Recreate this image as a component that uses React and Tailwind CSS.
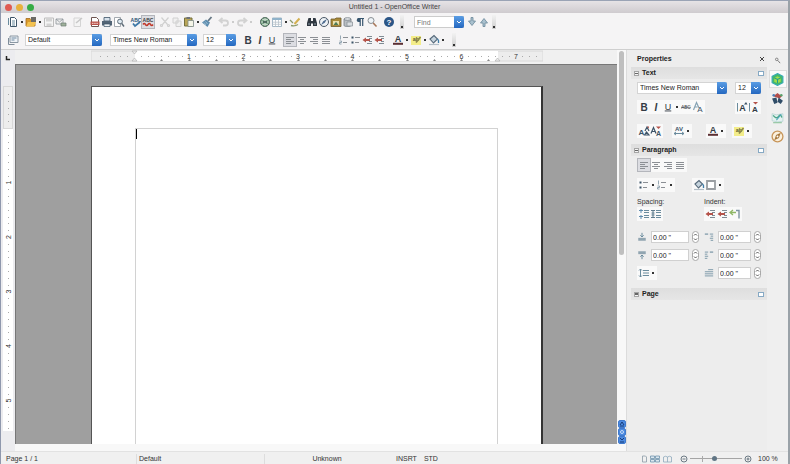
import { useState } from "react";
import clsx from "clsx";

const INCH = 54.5;
const NAVY = "#3d5468";
const TEAL = "#6a8b9d";
const RED = "#b5534a";
const INK = "#333b44";

function Letter({ x = 6, y = 9, size = 8, fill = INK, children, ...rest }) {
  return (
    <text x={x} y={y} fontSize={size} fill={fill} textAnchor="middle" fontFamily="Liberation Sans, sans-serif" {...rest}>
      {children}
    </text>
  );
}

function Lines({ rows, color = "#8b8f94" }) {
  return rows.map(([x1, x2, y]) => <path key={`${x1}-${y}`} d={`M${x1} ${y}H${x2}`} stroke={color} />);
}

const indentLines = [
  [5, 10, 2.5],
  [7, 10, 4.5],
  [7, 10, 7.5],
  [5, 10, 9.5],
];

const icons = {
  newDoc: (
    <>
      <path d="M3.5 1.5h4l2 2v7h-6z" fill="#fff" stroke={NAVY} />
      <path d="M1.5 2v7M5 5h3M5 7h3M5 9h3" stroke={TEAL} />
    </>
  ),
  open: (
    <>
      <path d="M1 2.5h4l1 1h4V10H1z" fill="#d99a2b" stroke="#a56a1c" strokeWidth=".8" />
      <path d="M6 1h5v5H6z" fill="#6b6a66" />
      <path d="M3 6h8l-2 4.5H1z" fill="#f3c24f" />
    </>
  ),
  save: (
    <>
      <path d="M1.5 2h9v8.500h-9z" fill="#f4f4f4" stroke="#bdbdbd" />
      <path d="M3 2h6v3.500H3zM3.500 7.500h5V10h-5z" fill="#d3d3d3" />
    </>
  ),
  mail: (
    <>
      <path d="M1 3h7v5H1z" fill="#eee" stroke="#8d949a" strokeWidth=".8" />
      <path d="M1 3l3.500 3L8 3" stroke="#8d949a" strokeWidth=".8" />
      <path d="M6 7h5v3H6z" fill="#9fb19a" stroke="#6f7b74" strokeWidth=".7" />
    </>
  ),
  edit: (
    <>
      <path d="M2 2h6.500v8.500H2z" fill="#f4f4f4" stroke="#d4d4d4" />
      <path d="M4 7l6-5" stroke="#c8c8c8" strokeWidth="1.600" />
    </>
  ),
  pdf: (
    <>
      <path d="M2.500 1.500h5l2 2v7h-7z" fill="#fff" stroke="#6d5450" />
      <path d="M1.500 5.500h9V9h-9z" fill="#b9524a" />
      <path d="M3 7.300h6" stroke="#f6dcd8" strokeDasharray="1.500 .7" />
    </>
  ),
  print: (
    <>
      <path d="M3 1.500h6V5H3z" fill="#d7e2ec" stroke={NAVY} strokeWidth=".8" />
      <path d="M1 5h10v4.500H1z" fill="#526475" />
      <path d="M3 8h6v2.500H3z" fill="#eef2f5" stroke={NAVY} strokeWidth=".7" />
    </>
  ),
  preview: (
    <>
      <path d="M1.500 1.500h6v9h-6z" fill="#fff" stroke="#8f979e" strokeWidth=".8" />
      <circle cx="7" cy="5.500" r="2.400" fill="#dfeaf2" stroke="#5c6a76" />
      <path d="M8.800 7.500L11 10.500" stroke="#5c6a76" strokeWidth="1.400" />
    </>
  ),
  spell: (
    <>
      <Letter y={5.5} size={5} fill="#2b5274" fontWeight="bold">ABC</Letter>
      <path d="M3 7.500l2 2.500 5-4" stroke="#3f78a6" strokeWidth="1.800" />
    </>
  ),
  autoSpell: (
    <>
      <Letter y={5.5} size={5} fill="#3b3f45" fontWeight="bold">ABC</Letter>
      <path d="M1 8.500q1.200-2 2.500 0t2.500 0 2.500 0 2.500 0" stroke="#c0392b" strokeWidth="1.500" />
    </>
  ),
  cut: <path d="M2.500 1.500l6 7M9.500 1.500l-6 7M2.500 8.500a1 1 0 100 2 1 1 0 000-2zM9.500 8.500a1 1 0 100 2 1 1 0 000-2z" stroke="#d0d0d0" strokeWidth="1.200" />,
  copy: <path d="M2 2h5v5H2zM5 5h5v5.500H5z" fill="#f0f0f0" stroke="#d0d0d0" />,
  paste: (
    <>
      <path d="M1.500 2h7.500v8h-7.500z" fill="#b9a557" stroke="#75703f" />
      <path d="M3.500 1h3.500v2H3.500z" fill="#6f7378" />
      <path d="M5 4.500h5.500v6H5z" fill="#f5f5e8" stroke="#7e8a86" strokeWidth=".8" />
    </>
  ),
  brush: (
    <>
      <path d="M10.500 1L7 5" stroke="#667684" strokeWidth="1.800" />
      <path d="M5 3.500l4 3-2.500 4.500L1 6.500z" fill="#5d8cae" />
      <path d="M3 6.500l2 2.500M4.500 5.500l2 2.500" stroke="#b5d1e2" strokeWidth=".7" />
    </>
  ),
  undo: <path d="M4.500 2L1.500 4.500l3 2.500M2 4.500h5.500a2.500 2.500 0 010 5H5" stroke="#d2d2d2" strokeWidth="1.800" />,
  redo: <path d="M7.500 2l3 2.500-3 2.500M10 4.500H4.500a2.500 2.500 0 000 5H7" stroke="#d2d2d2" strokeWidth="1.800" />,
  globe: (
    <>
      <circle cx="6" cy="6" r="4.500" fill="#7ea88a" stroke="#3d5a4c" />
      <path d="M1.500 6h9M6 1.500v9M3 3q3 2 6 0M3 9q3-2 6 0" stroke="#e6eee6" strokeWidth=".7" />
      <path d="M4 6h4" stroke="#2e4d42" strokeWidth="1.500" />
    </>
  ),
  table: (
    <>
      <path d="M1.500 2h9v8.500h-9z" fill="#fff" stroke="#9bb0c0" strokeWidth=".9" />
      <path d="M1.500 2h9v2h-9z" fill="#8fb2ca" />
      <path d="M1.500 6.200h9M1.500 8.300h9M4.500 4v6.500M7.500 4v6.500" stroke="#b7c2ca" strokeWidth=".8" />
    </>
  ),
  draw: (
    <>
      <path d="M1 4l3 3M2 9.500q4 1 7-1" stroke="#8a9a6c" strokeWidth="1.300" />
      <path d="M10.500 2.500L5.500 8" stroke="#d3b04f" strokeWidth="2" />
    </>
  ),
  find: (
    <>
      <path d="M2.500 2h2.500v3H7V2h2.500l1.500 5v3H7V7.500H5V10H1V7z" fill="#2f3740" />
      <path d="M2 8h2M8 8h2" stroke="#8b9aa6" />
    </>
  ),
  navigator: (
    <>
      <circle cx="6" cy="6" r="4.500" fill="#eef2f6" stroke="#4b5866" />
      <path d="M9 3L6.800 6.800 3 9l2.200-3.800z" fill="#4d6a8e" />
    </>
  ),
  gallery: (
    <>
      <path d="M1 3h4l1-1h5v8.500H1z" fill="#a98a3a" stroke="#6e5b2c" strokeWidth=".8" />
      <path d="M3 5h6v4H3z" fill="#e9dfae" />
      <path d="M3.500 9L6 5.800 8.500 9z" fill="#4f7a55" />
    </>
  ),
  data: (
    <>
      <path d="M2 3v6.500c0 1.300 7 1.300 7 0V3z" fill="#b9bec3" stroke="#747c84" strokeWidth=".8" />
      <ellipse cx="5.500" cy="3" rx="3.500" ry="1.300" fill="#e4e7ea" stroke="#747c84" strokeWidth=".8" />
      <path d="M5 6h5.500v4H5z" fill="#d9dde1" stroke="#858d94" strokeWidth=".7" />
    </>
  ),
  pilcrow: (
    <>
      <path d="M6 2.500H4.500a1.800 1.800 0 000 3.600H6z" fill="#38566f" />
      <path d="M3.500 2.500H10M6.200 2.500V10M8.700 2.500V10" stroke="#38566f" strokeWidth="1.200" />
    </>
  ),
  zoom: (
    <>
      <circle cx="5" cy="4.500" r="3" fill="#eef4f8" stroke="#8a8f94" />
      <path d="M7.200 7L10.500 10.500" stroke="#a8785a" strokeWidth="1.600" />
    </>
  ),
  help: (
    <>
      <circle cx="6" cy="6" r="5" fill="#2c5687" />
      <Letter y={9} size={8} fill="#fff" fontWeight="bold">?</Letter>
    </>
  ),
  down: <path d="M5 1.500h2V5h2.500L6 9.500 2.500 5H5z" fill="#a9c0ce" stroke="#7490a0" strokeWidth=".9" />,
  up: <path d="M5 10.500h2V7h2.500L6 2.500 2.500 7H5z" fill="#a9c0ce" stroke="#7490a0" strokeWidth=".9" />,
  styles: (
    <>
      <path d="M3 2h8v6.500H3z" fill="#eef2f6" stroke="#7f8d9a" strokeWidth=".9" />
      <path d="M4.500 4h5M4.500 6h3" stroke="#6e8aa3" />
      <path d="M1.500 4v6.500h6" stroke="#7f8d9a" />
    </>
  ),
  bold: <Letter y={9.5} size={10} fontWeight="bold">B</Letter>,
  italic: <Letter y={9.5} size={10} fontStyle="italic" fontWeight="bold">I</Letter>,
  underline: <Letter y={8.5} size={9} textDecoration="underline">U</Letter>,
  left: <Lines rows={[[2, 10, 3.5], [2, 7, 5.5], [2, 10, 7.5], [2, 7, 9.5]]} />,
  center: <Lines rows={[[2, 10, 3.5], [4, 8, 5.5], [2, 10, 7.5], [4, 8, 9.5]]} />,
  right: <Lines rows={[[2, 10, 3.5], [5, 10, 5.5], [2, 10, 7.5], [5, 10, 9.5]]} />,
  justify: <Lines rows={[[2, 10, 3.5], [2, 10, 5.5], [2, 10, 7.5], [2, 10, 9.5]]} />,
  numbered: (
    <>
      <path d="M2.500 1.500v4M1.500 7h2v1.500h-2V10h2" stroke="#7f95a3" strokeWidth=".8" />
      <Lines rows={[[5, 10, 3.5], [5, 9, 8.5]]} />
    </>
  ),
  bullets: (
    <>
      <path d="M1.500 2.500h2v2h-2zM1.500 7.500h2v2h-2z" fill={NAVY} />
      <Lines rows={[[5, 10, 3.5], [5, 9, 8.5]]} />
    </>
  ),
  outdent: (
    <>
      <Lines rows={indentLines} color="#7f8b94" />
      <path d="M4 3.500L.5 6 4 8.500V7h4V5H4z" fill={RED} />
    </>
  ),
  fontColor: (
    <>
      <Letter y={8} size={9} fontWeight="bold">A</Letter>
      <path d="M1 9.800h10" stroke="#5b2f33" strokeWidth="2" />
    </>
  ),
  highlight: (
    <>
      <path d="M1 2h10v9H1z" fill="#f3ed8a" />
      <Letter y={6.5} size={5.5} fill="#5b5a33" fontWeight="bold">ab</Letter>
      <path d="M10.500 3L6 8.500" stroke="#8f8a4c" strokeWidth="1.700" />
    </>
  ),
  fill: (
    <>
      <path d="M2 5l4-3.500L9.500 5l-4 4z" fill="#c5d3dd" stroke="#56697a" strokeWidth="1.100" />
      <path d="M9.500 5q1.500 1 1 4" stroke="#3f7da8" strokeWidth="1.400" />
      <path d="M1 10.500h10" stroke="#b3bec7" strokeWidth="1.200" />
    </>
  ),
  strike: (
    <>
      <Letter y={8} size={4.5}>ABC</Letter>
      <path d="M1 6.300h10" stroke={INK} strokeWidth=".6" />
    </>
  ),
  shadow: (
    <>
      <path d="M1.500 9L4.500 1.500 7 7M2.500 6h3" stroke="#86a3b4" strokeWidth="1.200" />
      <Letter x={8} y={10.5} size={8} fill={NAVY}>A</Letter>
    </>
  ),
  grow: (
    <>
      <path d="M1.500 2v8.500" stroke={TEAL} />
      <Letter x={6.5} y={10} size={9} fontWeight="bold">A</Letter>
      <path d="M8 3.500l2-2.500 1.500 2.500z" fill={NAVY} />
    </>
  ),
  shrink: (
    <>
      <path d="M1.500 2v8.500" stroke={TEAL} />
      <Letter x={7} y={10.5} size={8} fontWeight="bold">A</Letter>
      <path d="M5 1h5L7.500 3.500z" fill={RED} />
    </>
  ),
  superscript: (
    <>
      <Letter x={3.5} y={10} size={8} fill={NAVY} fontWeight="bold">A</Letter>
      <path d="M7 6l2-4 2 4M6.500 10l2-3 2.500 3z" stroke={NAVY} strokeWidth="1.200" />
      <path d="M9 1.500h2v2z" fill={RED} />
    </>
  ),
  subscript: (
    <>
      <path d="M1 8.500L3.500 2.500 6 8.500M2 6.500h3" stroke={NAVY} strokeWidth="1.200" />
      <Letter x={8.5} y={10.5} size={7} fill={NAVY} fontWeight="bold">A</Letter>
      <path d="M6 1.500h5L8.500 4z" fill={RED} />
    </>
  ),
  charSpacing: (
    <>
      <Letter y={6} size={6} fill={NAVY} fontWeight="bold">AV</Letter>
      <path d="M1 8.500h10M3 7L1 8.500 3 10M9 7l2 1.500L9 10" stroke={TEAL} />
    </>
  ),
  paraMore: (
    <>
      <path d="M1 2.500h4M3 1v4M1 8.500h4M3 7v4" stroke="#5f8cae" />
      <Lines rows={[[6, 11, 2.5], [6, 11, 4.5], [6, 11, 7.5], [6, 11, 9.5]]} color={TEAL} />
    </>
  ),
  paraLess: (
    <>
      <path d="M1 2.500h4M1 9.500h4M3 3v6M1.500 5h3M1.500 7h3" stroke="#5f7c8e" />
      <Lines rows={[[6, 11, 2.5], [6, 11, 4.5], [6, 11, 7.5], [6, 11, 9.5]]} color={TEAL} />
    </>
  ),
  hanging: (
    <>
      <path d="M4 2L1 4.500 4 7M1.500 4.500H7" stroke="#8fb765" strokeWidth="1.300" />
      <path d="M7 2.500h3v8" stroke="#7d93a1" strokeWidth="1.400" />
    </>
  ),
  above: (
    <>
      <path d="M6 1v5M4 4l2 2 2-2" stroke={TEAL} strokeWidth="1.200" />
      <path d="M1.500 7h9v3.500h-9z" fill="#91a5b1" />
    </>
  ),
  below: (
    <>
      <path d="M1.500 1.500h9V5h-9z" fill="#91a5b1" />
      <path d="M6 11V6M4 8l2-2 2 2" stroke={TEAL} strokeWidth="1.200" />
    </>
  ),
  before: (
    <>
      <path d="M1 2.500h4" stroke={TEAL} strokeWidth="1.300" />
      <Lines rows={[[7, 11, 2.5], [8, 11, 5], [7, 11, 7.5], [8, 11, 10]]} color={TEAL} />
    </>
  ),
  after: (
    <>
      <path d="M7 2.500h4" stroke={TEAL} strokeWidth="1.300" />
      <Lines rows={[[1, 5, 2.5], [1, 4, 5], [1, 5, 7.5], [1, 4, 10]]} color={TEAL} />
    </>
  ),
  firstLine: <Lines rows={[[5, 11, 2], [1, 11, 4.5], [1, 11, 7], [1, 11, 9.5]]} color={TEAL} />,
  lineSpacing: (
    <>
      <path d="M2.500 2v8M1 3.500L2.500 2 4 3.500M1 8.500L2.500 10 4 8.500" stroke={TEAL} />
      <Lines rows={[[5, 11, 3.5], [5, 11, 6], [5, 11, 8.5]]} color={TEAL} />
    </>
  ),
  swatch: <path d="M2 2h8v8H2z" fill="#fff" stroke="#9a9ea2" strokeWidth="1.800" />,
  gear: (
    <>
      <circle cx="5" cy="4.500" r="1.700" stroke="#666" fill="none" />
      <path d="M6.500 6l3 3.500" stroke="#555" />
    </>
  ),
  properties: (
    <>
      <path d="M6 .5l5 2.500v6L6 11.500 1 9V3z" fill="#43b96a" stroke="#35a9b8" />
      <path d="M3 4.500l3-1.500 3 1.500v3.500L6 9.500 3 8z" fill="#9fdc4c" />
      <path d="M3 4.500L6 6l3-1.500M6 6v3.500" stroke="#1f9c8c" />
    </>
  ),
  character: (
    <>
      <path d="M2 4l4-3 4 3-2 2z" fill="#b24d4a" />
      <path d="M1 6l4-1 1 5-3 1zM7 5l4 3-2 3-3-2z" fill="#304d68" />
      <circle cx="9.500" cy="3" r="1.200" fill="#5aa06a" />
      <circle cx="2.500" cy="3" r="1.200" fill="#4c7fb4" />
    </>
  ),
  galleryTab: (
    <>
      <path d="M1 2.500l4 1 6-1v7L6 10 1 9z" fill="#e4f2f0" stroke="#b4d2d2" strokeWidth=".7" />
      <path d="M2 4q3 4 5 1t3 1" stroke="#4ca587" strokeWidth="1.300" />
      <path d="M9.500 3L5 8.500" stroke="#4fa5bd" />
      <path d="M2 10.800h8" stroke="#8bc39b" />
    </>
  ),
  compass: (
    <>
      <circle cx="6" cy="6" r="5" fill="#fbf0dc" stroke="#c8965a" strokeWidth="1.200" />
      <path d="M9 2.500L7.300 7.300 3 9.500l1.700-4.800z" fill="#a8793d" />
      <circle cx="6" cy="6" r=".9" fill="#fff" />
    </>
  ),
};

function Icon({ name, className = "size-3" }) {
  return (
    <svg viewBox="0 0 12 12" fill="none" className={clsx("shrink-0", className)} aria-hidden="true">
      {icons[name]}
    </svg>
  );
}

function Tool({ name, pressed = false, menu = false, muted = false }) {
  return (
    <>
      <button
        type="button"
        aria-label={name}
        aria-pressed={pressed || undefined}
        className={clsx("flex size-3 shrink-0 items-center justify-center", pressed && "bg-[#dcdde2] outline outline-[#b4b6bc]")}
      >
        <Icon name={name} />
      </button>
      {menu && (
        <button type="button" aria-label={`${name} menu`} className="flex w-[6px] shrink-0 items-center justify-center">
          <span className={clsx("size-[2px]", muted ? "bg-[#cccccc]" : "bg-[#333333]")} />
        </button>
      )}
    </>
  );
}

function Group({ items }) {
  return (
    <div className="flex">
      {items.map((item, index) => (
        <Tool key={`${item.name}-${index}`} {...item} />
      ))}
    </div>
  );
}

function Chevron() {
  return (
    <span className="pointer-events-none absolute inset-y-0 right-0 flex w-[10px] items-center justify-center rounded-r-xs bg-linear-to-b from-[#5a9de4] to-[#2468c0]">
      <svg viewBox="0 0 6 4" className="h-1 w-[6px]" fill="none" aria-hidden="true">
        <path d="M1 1l2 2 2-2" stroke="#fff" />
      </svg>
    </span>
  );
}

function Combo({ label, value, className }) {
  return (
    <div className={clsx("relative h-3", className)}>
      <select
        aria-label={label}
        defaultValue={value}
        className="block h-3 w-full appearance-none border border-[#d4d4d4] bg-white pl-[2px] text-[7px] leading-[10px] text-[#222222] outline-none"
      >
        <option>{value}</option>
      </select>
      <Chevron />
    </div>
  );
}

function Handle() {
  return (
    <div className="flex h-[14px] w-1 items-end justify-center bg-linear-to-b from-[#f2f2f2] to-[#cfcfcf] pb-px">
      <span className="size-[2px] bg-[#333333]" />
    </div>
  );
}

function Toolbars() {
  return (
    <div className="border-b border-[#cfcfcf] bg-[#f5f4f5]">
      <div className="flex h-[18px] items-center pl-[6px]">
        <div className="flex items-center gap-[5px]">
          <Group items={[{ name: "newDoc", menu: true }, { name: "open", menu: true }, { name: "save" }, { name: "mail" }]} />
          <Group items={[{ name: "edit" }]} />
          <Group items={[{ name: "pdf" }, { name: "print" }, { name: "preview" }]} />
          <Group items={[{ name: "spell" }, { name: "autoSpell", pressed: true }]} />
          <Group items={[{ name: "cut" }, { name: "copy" }, { name: "paste", menu: true }, { name: "brush" }]} />
          <Group items={[{ name: "undo", menu: true, muted: true }, { name: "redo", menu: true, muted: true }]} />
          <Group items={[{ name: "globe" }, { name: "table", menu: true }, { name: "draw" }]} />
          <Group items={[{ name: "find" }, { name: "navigator" }, { name: "gallery" }, { name: "data" }, { name: "pilcrow" }, { name: "zoom" }]} />
          <Group items={[{ name: "help" }]} />
          <Handle />
        </div>
        <div className="ml-[10px] flex items-center gap-[2px]">
          <div className="relative w-[50px]">
            <input
              type="text"
              aria-label="Find"
              placeholder="Find"
              className="block h-3 w-full border border-[#cccccc] bg-white pl-[2px] text-[7px] leading-[10px] placeholder:text-[#777777] outline-none"
            />
            <Chevron />
          </div>
          <Group items={[{ name: "down" }, { name: "up" }]} />
          <Handle />
        </div>
      </div>
      <div className="flex h-[18px] items-center gap-[6px] pl-[6px]">
        <Group items={[{ name: "styles" }]} />
        <Combo label="Paragraph style" value="Default" className="w-[77px]" />
        <Combo label="Font name" value="Times New Roman" className="ml-[2px] w-[87px]" />
        <Combo label="Font size" value="12" className="w-[33px]" />
        <Group items={[{ name: "bold" }, { name: "italic" }, { name: "underline" }]} />
        <Group items={[{ name: "left", pressed: true }, { name: "center" }, { name: "right" }, { name: "justify" }]} />
        <Group items={[{ name: "numbered" }, { name: "bullets" }, { name: "outdent" }, { name: "outdent" }]} />
        <Group items={[{ name: "fontColor", menu: true }, { name: "highlight", menu: true }, { name: "fill", menu: true }]} />
        <Handle />
      </div>
    </div>
  );
}

// Dots at every eighth of an inch, a tab stop at every half, a number at every inch.
function rulerMarks(from, to) {
  const marks = [];
  for (let i = from; i <= to; i += 1) {
    marks.push({ i, pos: 43 + (i * INCH) / 8, whole: i % 8 === 0, half: i % 4 === 0 });
  }
  return marks;
}

function HorizontalRuler() {
  return (
    <svg className="h-3 w-[452px] shrink-0 text-[7px]" aria-hidden="true">
      <rect x="0" y="1" width="452" height="10" fill="#ededed" stroke="#d8d8d8" />
      <rect x="44" y="1" width="363" height="10" fill="#fff" />
      {rulerMarks(-5, 59).map(({ i, pos, whole, half }) => (
        <g key={i}>
          {whole && i > 0 ? (
            <text x={pos + 0.5} y="8.500" textAnchor="middle" fill="#333">
              {i / 8}
            </text>
          ) : (
            i !== 0 && <rect x={Math.round(pos)} y="6" width="1" height="1" fill="#aaa" />
          )}
          {half && i > 0 && i < 54 && <path d={`M${Math.round(pos) - 1} 11h3l-1.500-2z`} fill="#888" />}
        </g>
      ))}
      <path d="M41 1h5l-2.500 3zM41 11h5l-2.500-3zM404 11h5l-2.500-3z" fill="#eee" stroke="#aaa" strokeWidth=".6" />
    </svg>
  );
}

function VerticalRuler() {
  return (
    <svg className="min-h-0 w-[10px] flex-1 text-[7px]" aria-hidden="true">
      <rect width="10" height="100%" fill="#fff" />
      <rect x=".5" y=".5" width="9" height="42" fill="#ededed" stroke="#d8d8d8" />
      {rulerMarks(-5, 44).map(({ i, pos, whole }) =>
        whole && i > 0 ? (
          <text key={i} transform={`translate(7.500 ${pos - 1}) rotate(-90)`} textAnchor="middle" fill="#333">
            {i / 8}
          </text>
        ) : (
          i !== 0 && <rect key={i} x="5" y={Math.round(pos) - 1} width="1" height="1" fill="#aaa" />
        ),
      )}
    </svg>
  );
}

function Workspace() {
  return (
    <div className="flex min-w-0 flex-1">
      <div className="flex w-[14px] shrink-0 flex-col items-center bg-[#ececef] pb-5">
        <div className="flex h-9 w-full justify-center pt-[5px]">
          <svg viewBox="0 0 6 6" className="size-[6px]" fill="none" aria-hidden="true">
            <path d="M1.500 1v3.500H5" stroke="#222" strokeWidth="1.500" />
          </svg>
        </div>
        <VerticalRuler />
      </div>
      <div className="flex min-w-0 flex-1 flex-col bg-[#f8f8f8]">
        <div className="flex h-[14px] shrink-0 items-start justify-center overflow-hidden border-l border-[#f0f0f0] bg-[#f0f0f0]">
          <HorizontalRuler />
        </div>
        <div className="flex min-h-0 flex-1 justify-center overflow-hidden border-t border-l border-[#777777] bg-[#9f9f9f] pt-[21px]">
          <div className="flex w-[452px] shrink-0 border-t border-r-2 border-l border-t-[#555555] border-r-[#333333] border-l-[#555555] bg-white px-[43px] pt-[41px]">
            <div className="flex flex-1 border border-b-0 border-[#d2d2d2]">
              <span className="h-[10px] w-px bg-black" />
              <textarea aria-label="Document text" className="min-h-0 flex-1 resize-none text-[9px] outline-none" />
            </div>
          </div>
        </div>
        <div className="h-[7px] shrink-0" />
      </div>
      <div className="flex w-[9px] shrink-0 flex-col items-center bg-[#f8f8f8] pt-px pb-[7px]">
        <div className="h-[204px] w-[5px] rounded-full bg-[#bfbfbf]" />
        <div className="mt-auto flex w-2 flex-col">
          {["Previous page", "Navigation", "Next page"].map((label, index) => (
            <button key={label} type="button" aria-label={label} className="flex size-2 items-center justify-center rounded-xs border border-[#3f79cc] bg-[#4c8ae0]">
              <svg viewBox="0 0 6 6" className="size-[6px]" fill="none" aria-hidden="true">
                {index === 1 ? <circle cx="3" cy="3" r="1.500" stroke="#c6dcf7" /> : <path d={index ? "M1 1l2 2 2-2M1 5h4" : "M1 4l2-3 2 3M1 5h4"} stroke="#163a77" />}
              </svg>
            </button>
          ))}
        </div>
      </div>
    </div>
  );
}

function SectionHeader({ title, collapsed = false }) {
  return (
    <div className="flex h-3 items-center gap-[3px] bg-linear-to-b from-[#dedede] to-[#e6e6e6] px-[3px]">
      <button type="button" aria-label={`Toggle ${title}`} className="flex size-[5px] items-center justify-center border border-[#a5a5a5] bg-[#f5f5f5]">
        <span className={clsx("w-[3px] bg-[#666666]", collapsed ? "h-[2px]" : "h-px")} />
      </button>
      <h3 className="text-[7px] leading-3 font-bold text-[#222222]">{title}</h3>
      <button type="button" aria-label={`${title} options`} className="ml-auto h-[5px] w-[6px] border border-[#86a9c4] bg-white" />
    </div>
  );
}

function Tray({ items, className }) {
  return (
    <div className={clsx("flex h-[14px] items-center bg-[#f9f9f9] px-px", className)}>
      <Group items={items} />
    </div>
  );
}

function Spinner({ icon, label, wide }) {
  const [value, setValue] = useState("0.00 \"");
  const step = (amount) => setValue(`${Math.max(0, parseFloat(value) + amount).toFixed(2)} "`);

  return (
    <div className="flex items-center">
      <Icon name={icon} className="size-[10px]" />
      <input
        type="text"
        aria-label={label}
        value={value}
        onChange={(event) => setValue(event.target.value)}
        className={clsx("ml-1 h-3 border border-[#d0d0d0] bg-white pl-px text-[7px] leading-[10px] text-[#222222] outline-none", wide ? "w-[38px]" : "w-[33px]")}
      />
      <span className="ml-[3px] flex h-3 w-[7px] flex-col rounded-full border border-[#a9a9a9] bg-white">
        <button type="button" aria-label={`Increase ${label}`} onClick={() => step(0.1)} className="flex flex-1 items-center justify-center">
          <svg viewBox="0 0 5 3" className="h-[3px] w-[5px]" fill="none" aria-hidden="true">
            <path d="M1 2.500L2.500 1 4 2.500" stroke="#555" />
          </svg>
        </button>
        <button type="button" aria-label={`Decrease ${label}`} onClick={() => step(-0.1)} className="flex flex-1 items-center justify-center">
          <svg viewBox="0 0 5 3" className="h-[3px] w-[5px]" fill="none" aria-hidden="true">
            <path d="M1 .5L2.500 2 4 .5" stroke="#555" />
          </svg>
        </button>
      </span>
    </div>
  );
}

function Sidebar() {
  return (
    <aside className="flex shrink-0 border-l border-[#dcdcdc] bg-[#ededed] pl-1">
      <div className="w-[136px]">
        <div className="flex h-[17px] items-center justify-between pr-[2px] pl-[6px]">
          <h2 className="text-[7px] leading-3 font-bold text-[#222222]">Properties</h2>
          <button type="button" aria-label="Close sidebar">
            <svg viewBox="0 0 6 6" className="size-[6px]" fill="none" aria-hidden="true">
              <path d="M1 1l4 4M5 1L1 5" stroke="#444" />
            </svg>
          </button>
        </div>

        <SectionHeader title="Text" />
        <div className="flex flex-col gap-[6px] pt-[3px] pr-[6px] pb-[6px] pl-[6px]">
          <div className="flex justify-between">
            <Combo label="Sidebar font name" value="Times New Roman" className="w-[90px]" />
            <Combo label="Sidebar font size" value="12" className="w-[26px]" />
          </div>
          <div className="flex justify-between">
            <Tray items={[{ name: "bold" }, { name: "italic" }, { name: "underline", menu: true }, { name: "strike" }, { name: "shadow" }]} />
            <Tray items={[{ name: "grow" }, { name: "shrink" }]} />
          </div>
          <div className="flex pt-1">
            <Tray items={[{ name: "superscript" }, { name: "subscript" }]} />
            <Tray items={[{ name: "charSpacing", menu: true }]} className="ml-[9px]" />
            <Tray items={[{ name: "fontColor", menu: true }]} className="ml-[14px]" />
            <Tray items={[{ name: "highlight", menu: true }]} className="ml-[6px]" />
          </div>
        </div>

        <SectionHeader title="Paragraph" />
        <div className="flex flex-col gap-[6px] pt-[2px] pr-[4px] pb-[9px] pl-[6px]">
          <div className="flex">
            <Tray items={[{ name: "left", pressed: true }, { name: "center" }, { name: "right" }, { name: "justify" }]} />
          </div>
          <div className="flex">
            <Tray items={[{ name: "bullets", menu: true }, { name: "numbered", menu: true }]} />
            <Tray items={[{ name: "fill" }, { name: "swatch", menu: true }]} className="ml-[17px]" />
          </div>
          <div className="grid grid-cols-[67px_1fr] gap-y-[6px] text-[7px] leading-2 text-[#333333]">
            <div>
              <p>Spacing:</p>
              <Tray items={[{ name: "paraMore" }, { name: "paraLess" }]} className="mt-px mb-1 w-[26px]" />
            </div>
            <div>
              <p>Indent:</p>
              <Tray items={[{ name: "outdent" }, { name: "outdent" }, { name: "hanging" }]} className="mt-px mb-1 w-[38px]" />
            </div>
            <Spinner icon="above" label="Space above" wide />
            <Spinner icon="before" label="Indent before" />
            <Spinner icon="below" label="Space below" wide />
            <Spinner icon="after" label="Indent after" />
            <div className="flex h-3 items-center">
              <Tray items={[{ name: "lineSpacing", menu: true }]} />
            </div>
            <Spinner icon="firstLine" label="First line indent" />
          </div>
        </div>

        <SectionHeader title="Page" collapsed />
      </div>
      <nav aria-label="Sidebar decks" className="flex w-[21px] flex-col items-center gap-[3px] bg-[#efefef] pt-[2px]">
        <button type="button" aria-label="Sidebar settings" className="flex h-4 w-4 items-center justify-center">
          <Icon name="gear" className="size-[9px]" />
        </button>
        {["properties", "character", "galleryTab", "compass"].map((name) => (
          <button
            key={name}
            type="button"
            aria-label={name}
            className={clsx("flex size-4 items-center justify-center", name === "properties" && "bg-[#fafafa] outline outline-[#dddddd]")}
          >
            <Icon name={name} className="size-[13px]" />
          </button>
        ))}
      </nav>
    </aside>
  );
}

function StatusBar() {
  const [zoom, setZoom] = useState(47);

  return (
    <footer className="flex h-[13px] shrink-0 items-center border-t border-[#e2e2e2] bg-[#f0f0f0] pt-px pl-[5px] text-[7px] leading-[10px] text-[#333333]">
      <span className="w-[130px]">Page 1 / 1</span>
      <span className="w-[128px] border-l border-[#dddddd] pl-[2px]">Default</span>
      <span className="w-[125px] border-l border-[#dddddd] text-center">Unknown</span>
      <span className="ml-[7px]">INSRT</span>
      <span className="ml-[7px]">STD</span>
      <div className="ml-auto flex items-center">
        <svg viewBox="0 0 32 8" className="h-2 w-8" fill="none" aria-hidden="true">
          <path d="M1.500 1h3l1 1v5h-4z" stroke="#8a9aa6" strokeWidth=".8" />
          <path d="M9.500 1h4v2.500h-4zM9.500 4.500h4V7h-4zM14.500 1h4v2.500h-4zM14.500 4.500h4V7h-4z" fill="#dbe7ef" stroke="#6f93ac" strokeWidth=".8" />
          <path d="M22.500 2q2-1.500 4 0 2-1.500 4 0v5h-8zM26.500 2v5" stroke="#8faabd" strokeWidth=".8" />
        </svg>
        <button type="button" aria-label="Zoom out" onClick={() => setZoom(Math.max(0, zoom - 5))} className="ml-[7px]">
          <svg viewBox="0 0 8 8" className="size-2" fill="none" aria-hidden="true">
            <path d="M4 1a3 3 0 100 6 3 3 0 000-6zM2.500 4h3" stroke="#5e6d78" strokeWidth=".9" />
          </svg>
        </button>
        <div className="relative ml-[2px] flex h-2 w-[52px] items-center">
          <span className="absolute top-px left-3 h-[6px] w-px bg-[#aaaaaa]" />
          <input
            type="range"
            aria-label="Zoom"
            value={zoom}
            onChange={(event) => setZoom(Number(event.target.value))}
            className="h-px w-full appearance-none bg-[#a5a5a5] [&::-webkit-slider-thumb]:size-[5px] [&::-webkit-slider-thumb]:appearance-none [&::-webkit-slider-thumb]:rounded-full [&::-webkit-slider-thumb]:bg-[#607584]"
          />
        </div>
        <button type="button" aria-label="Zoom in" onClick={() => setZoom(Math.min(100, zoom + 5))} className="ml-[2px]">
          <svg viewBox="0 0 8 8" className="size-2" fill="none" aria-hidden="true">
            <path d="M4 1a3 3 0 100 6 3 3 0 000-6zM2.500 4h3M4 2.500v3" stroke="#5e6d78" strokeWidth=".9" />
          </svg>
        </button>
        <span className="w-[36px] pl-[6px]">100 %</span>
      </div>
    </footer>
  );
}

export default function App() {
  return (
    <div className="flex h-screen flex-col overflow-hidden border-t border-r-2 border-l border-t-[#9aa3b5] border-r-[#9aa2a8] border-l-[#8f98ad] bg-[#f0f0f0] font-['Liberation_Sans',Arial,sans-serif]">
      <header className="relative flex h-3 shrink-0 items-center justify-center bg-linear-to-b from-[#e6e3e6] to-[#cfcbcf]">
        <div className="absolute inset-y-0 left-1 flex items-center gap-1">
          <button type="button" aria-label="Close" className="size-[7px] rounded-full bg-[#e05a52]" />
          <button type="button" aria-label="Minimize" className="size-[7px] rounded-full bg-[#e8b13c]" />
          <button type="button" aria-label="Full screen" className="size-[7px] rounded-full bg-[#35ac45]" />
        </div>
        <h1 className="text-[7px] leading-[10px] text-[#444444]">Untitled 1 - OpenOffice Writer</h1>
      </header>
      <Toolbars />
      <main className="flex min-h-0 flex-1">
        <Workspace />
        <Sidebar />
      </main>
      <StatusBar />
    </div>
  );
}
